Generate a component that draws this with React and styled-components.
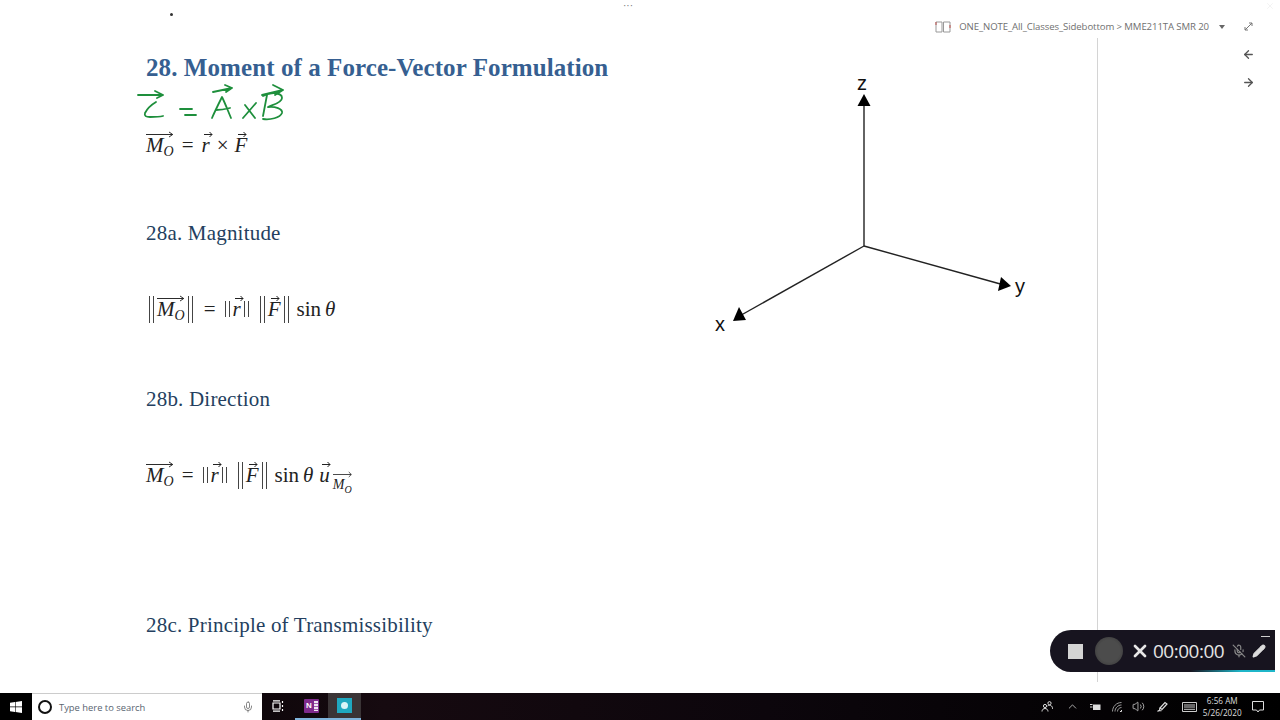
import styled, { createGlobalStyle } from 'styled-components'
import { ArrowLeft, ArrowRight, ChevronUp, Mic, MicOff, Pencil, X, Volume2 } from 'lucide-react'

const GlobalStyle = createGlobalStyle`
  html, body { margin: 0; padding: 0; background: #fff; overflow: hidden; }
  * { box-sizing: border-box; }
`

const Vec = ({ children, wide }) => <VecWrap $wide={wide}><VecArrow $wide={wide} viewBox={wide ? '0 0 30 7' : '0 0 10 7'} preserveAspectRatio="none"><path d={wide ? 'M0 3.5H29M25 1l4 2.5-4 2.5' : 'M1 3.5H9M6.5 1L9 3.5 6.5 6'} fill="none" stroke="#222" strokeWidth="1" /></VecArrow>{children}</VecWrap>

const Mo = ({ small }) => (
  <Vec wide><I>M</I><Sub $small={small}><I>O</I></Sub></Vec>
)

const Ink = () => (
  <InkSvg viewBox="0 0 150 40" width="150" height="40">
    <g fill="none" stroke="#1e8f3c" strokeWidth="1.8" strokeLinecap="round" strokeLinejoin="round">
      <path d="M1 10L26 10M18 6l8 4-6 3" />
      <path d="M19 17C14 20 10 24 8 28C7 31 9 32 13 32C17 32 22 32 26 31" />
      <path d="M43 24H55M48 30H59" />
      <path d="M75 33C78 26 82 18 85 12C88 18 91 26 94 33M79 25C84 25 89 24 93 23" />
      <path d="M76 7L95 3M88 0l7 3-6 4" />
      <path d="M106 33L119 18M108 20L118 33" />
      <path d="M130 10L126 31" />
      <path d="M126 11C133 7 145 7 145 13C145 18 135 20 131 22C138 21 146 24 145 28C143 33 133 35 126 34" />
      <path d="M125 10L146 5M136 0l10 5-8 5" />
    </g>
  </InkSvg>
)

const Axes = () => (
  <DiagramSvg viewBox="0 0 340 280" width="340" height="280">
    <g stroke="#222" strokeWidth="1.4" fill="none">
      <path d="M164 186V42" />
      <path d="M164 186L36 258" />
      <path d="M164 186L304 225" />
    </g>
    <g fill="#000">
      <path d="M164 34l6.5 12h-13z" />
      <path d="M311 226l-13 5 3-14z" />
      <path d="M33 261l6-14 7 13z" />
    </g>
    <AxisLabel x="157" y="30">z</AxisLabel>
    <AxisLabel x="315" y="233">y</AxisLabel>
    <AxisLabel x="15" y="271">x</AxisLabel>
  </DiagramSvg>
)

export default function App() {
  return (
    <Window>
      <GlobalStyle />
      <Workspace>
        <TopBar>
          <Speck />
          <Dots>···</Dots>
          <Breadcrumb>
            <svg width="16" height="12" viewBox="0 0 16 12">
              <path d="M1 1h6v10H1zM8.5 1H15v10H8.5z" fill="none" stroke="#999" strokeWidth="1" />
              <path d="M1 1v3M15 4v3" stroke="#c0504d" strokeWidth="1" />
            </svg>
            <Crumb>ONE_NOTE_All_Classes_Sidebottom &gt; MME211TA SMR 20</Crumb>
            <Caret />
          </Breadcrumb>
          <Expand>
            <svg width="9" height="9" viewBox="0 0 9 9">
              <path d="M1 8L8 1M5 1H8V4M1 5V8H4" fill="none" stroke="#777" strokeWidth="1" />
            </svg>
          </Expand>
          <CloseFaint><X size={10} strokeWidth={1} /></CloseFaint>
        </TopBar>
        <Body>
          <NotePane>
            <TextColumn>
              <Title>28. Moment of a Force-Vector Formulation</Title>
              <Ink />
              <Formula $top={6}>
                <Mo /><Op>=</Op><Vec><I>r</I></Vec><Op $tight>×</Op><Vec><I>F</I></Vec>
              </Formula>
              <Heading $top={60}>28a. Magnitude</Heading>
              <Formula $top={48}>
                <Bars $tall /><Mo /><Bars $tall /><Op>=</Op>
                <Bars /><Vec><I>r</I></Vec><Bars /><Gap $w={6} />
                <Bars $tall /><Vec><I>F</I></Vec><Bars $tall /><Gap />sin<Gap /><I>θ</I>
              </Formula>
              <Heading $top={62}>28b. Direction</Heading>
              <Formula $top={48}>
                <Mo /><Op>=</Op>
                <Bars /><Vec><I>r</I></Vec><Bars /><Gap $w={6} />
                <Bars $tall /><Vec><I>F</I></Vec><Bars $tall /><Gap />sin<Gap /><I>θ</I><Gap $w={6} />
                <Vec><I>u</I></Vec><Gap $w={2} /><Sub $drop><Mo small /></Sub>
              </Formula>
              <Heading $top={122}>28c. Principle of Transmissibility</Heading>
            </TextColumn>
            <Axes />
          </NotePane>
          <SideRail>
            <ArrowLeft size={13} strokeWidth={2.4} />
            <ArrowRight size={13} strokeWidth={2.4} />
          </SideRail>
        </Body>
        <Recorder>
          <StopSquare />
          <RecordDot />
          <X size={20} strokeWidth={3.2} color="#e6e6e6" />
          <Timer>00:00:00</Timer>
          <MicOff size={14} strokeWidth={2} color="#8a8a8a" />
          <RecorderPencil size={14} strokeWidth={2} color="#dcdcdc" fill="#dcdcdc" />
          <MinBar />
          <Progress />
        </Recorder>
      </Workspace>
      <Taskbar>
        <StartButton>
          <svg width="12" height="12" viewBox="0 0 12 12">
            <path d="M0 1.7L5 1V5.6H0zM5.6 .9L12 0V5.6H5.6zM0 6.2H5V11L0 10.3zM5.6 6.2H12V12L5.6 11.1z" fill="#fff" />
          </svg>
        </StartButton>
        <SearchBox>
          <CortanaRing />
          <SearchText>Type here to search</SearchText>
          <Mic size={12} strokeWidth={1.4} color="#555" />
        </SearchBox>
        <TaskIcon>
          <svg width="13" height="12" viewBox="0 0 13 12">
            <path d="M1 3h7v6H1zM1 .8h7M1 11.2h7M10.5 1v2M10.5 5v2M10.5 9v2" fill="none" stroke="#fff" strokeWidth="1.2" />
          </svg>
        </TaskIcon>
        <TaskIcon $running>
          <OneNoteTile>N</OneNoteTile>
        </TaskIcon>
        <TaskIcon $running $active>
          <RecorderTile><RecorderDot /></RecorderTile>
        </TaskIcon>
        <Tray>
          <TraySlot $w={27}>
            <svg width="12" height="11" viewBox="0 0 12 11" fill="none" stroke="#ddd" strokeWidth="1">
              <circle cx="4" cy="5" r="1.6" />
              <path d="M1 10.5C1 8.5 2.5 7.5 4 7.5S7 8.500 7 10.500" />
              <circle cx="8.500" cy="2.200" r="1.600" />
              <path d="M6.500 5C7.500 4 9.500 4 10.500 5S11.500 7 11.500 8" />
            </svg>
          </TraySlot>
          <TraySlot $w={24}><ChevronUp size={13} strokeWidth={1.4} /></TraySlot>
          <TraySlot $w={21.5}>
            <svg width="11" height="8" viewBox="0 0 11 8">
              <path d="M3 1.500h7.500v5.500H3z" fill="#ddd" />
              <path d="M0 1.500h2.500M0 4h2.500" stroke="#ddd" strokeWidth="1" />
            </svg>
          </TraySlot>
          <TraySlot $w={21.5}>
            <svg width="10" height="10" viewBox="0 0 10 10" fill="none" stroke="#999" strokeWidth="1">
              <path d="M.5 9.500C.5 4.500 4.500 .5 9.500 .5M3 9.500C3 6 6 3 9.500 3M5.500 9.500C5.500 7.300 7.300 5.500 9.500 5.500" />
              <path d="M8 9.500h1.500V8" stroke="#ddd" />
            </svg>
          </TraySlot>
          <TraySlot $w={22.5}><Volume2 size={13} strokeWidth={1.4} /></TraySlot>
          <TraySlot $w={24.5}>
            <svg width="11" height="11" viewBox="0 0 11 11" fill="none" stroke="#ddd" strokeWidth="1.200">
              <path d="M3 7L8 1.500L10 3L5 8.500Z" />
              <path d="M3 7L2.500 9M.5 10.500C2 8.500 3 10.500 4.500 9.500" />
            </svg>
          </TraySlot>
          <TraySlot $w={30}>
            <svg width="15" height="10" viewBox="0 0 15 10" fill="none" stroke="#ccc" strokeWidth="1">
              <path d="M.5 .5h14v9H.5zM2 3h11M2 5h11M2 7.300h11" />
            </svg>
          </TraySlot>
          <TraySlot $w={35.5}>
            <Clock><span>6:56 AM</span><span>5/26/2020</span></Clock>
          </TraySlot>
          <TraySlot $w={36}>
            <svg width="12" height="12" viewBox="0 0 12 12" fill="none" stroke="#ddd" strokeWidth="1">
              <path d="M.5 .5h11v8.500H7.500L6 11 4.500 9H.5z" />
            </svg>
          </TraySlot>
        </Tray>
      </Taskbar>
    </Window>
  )
}

const Window = styled.div`
  width: 1280px;
  height: 720px;
  display: flex;
  flex-direction: column;
  background: #fff;
  overflow: hidden;
`
const Workspace = styled.div`
  position: relative;
  flex: 1;
  display: flex;
  flex-direction: column;
  min-height: 0;
`
const TopBar = styled.div`
  position: relative;
  height: 38px;
  flex: none;
  display: flex;
  align-items: center;
  justify-content: flex-end;
  padding-right: 27px;
  padding-top: 15px;
`
const Speck = styled.div`
  position: absolute;
  left: 170px;
  top: 13px;
  width: 3px;
  height: 3px;
  border-radius: 50%;
  background: #333;
`
const Dots = styled.div`
  position: absolute;
  left: 623px;
  top: 0;
  font: 10px/12px "Liberation Sans", sans-serif;
  color: #777;
`
const Breadcrumb = styled.div`
  display: flex;
  align-items: center;
  gap: 8px;
  color: #666;
`
const Crumb = styled.span`
  font: 9.600px "Open Sans", sans-serif;
  letter-spacing: -0.1px;
  color: #707070;
`
const Caret = styled.span`
  width: 0;
  height: 0;
  margin-left: 2px;
  border-left: 3.500px solid transparent;
  border-right: 3.500px solid transparent;
  border-top: 4px solid #666;
`
const Expand = styled.div`
  display: flex;
  margin-left: 19px;
`
const CloseFaint = styled.div`
  position: absolute;
  right: 5px;
  top: 1px;
  color: #e2e2e2;
  display: flex;
`
const Body = styled.div`
  flex: 1;
  min-height: 0;
  display: flex;
  padding-bottom: 11px;
`
const NotePane = styled.div`
  width: 1098px;
  display: flex;
  border-right: 1px solid #d4d4d4;
  padding-left: 146px;
`
const TextColumn = styled.div`
  width: 554px;
  flex: none;
  display: flex;
  flex-direction: column;
  align-items: flex-start;
`
const Title = styled.h1`
  margin: 15px 0 0;
  font: bold 25px/30px "Liberation Serif", serif;
  letter-spacing: 0.08px;
  color: #365f91;
  white-space: nowrap;
`
const InkSvg = styled.svg`
  display: block;
  overflow: visible;
  margin: 2px 0 0 -9px;
`
const Formula = styled.div`
  margin-top: ${p => p.$top}px;
  display: flex;
  align-items: baseline;
  height: 28px;
  font: 21px/28px "Liberation Serif", serif;
  color: #222;
  white-space: nowrap;
`
const Heading = styled.h2`
  margin: ${p => p.$top}px 0 0;
  font: 21px/28px "Liberation Serif", serif;
  letter-spacing: 0.2px;
  color: #243f60;
  white-space: nowrap;
`
const I = styled.i`
  font-style: italic;
`
const VecWrap = styled.span`
  position: relative;
  display: inline-flex;
  align-items: baseline;
  padding-right: ${p => (p.$wide ? 0 : 1)}px;
`
const VecArrow = styled.svg`
  position: absolute;
  left: ${p => (p.$wide ? 0 : 2)}px;
  top: 0;
  width: ${p => (p.$wide ? '100%' : '10px')};
  height: 7px;
`
const Sub = styled.span`
  font-size: ${p => (p.$small ? 10 : 14)}px;
  position: relative;
  top: ${p => (p.$drop ? 7 : 4)}px;
`
const Op = styled.span`
  margin: 0 ${p => (p.$tight ? 6 : 8)}px;
`
const Gap = styled.span`
  width: ${p => p.$w || 4}px;
`
const Bars = styled.span`
  align-self: center;
  width: 5px;
  height: ${p => (p.$tall ? 27 : 16)}px;
  margin: 0 ${p => (p.$tall ? 3 : 2)}px;
  border-left: 1px solid #444;
  border-right: 1px solid #444;
`
const DiagramSvg = styled.svg`
  display: block;
  flex: none;
  margin-top: 22px;
`
const AxisLabel = styled.text`
  font: 20px "Liberation Sans", sans-serif;
  fill: #111;
`
const SideRail = styled.div`
  flex: 1;
  display: flex;
  flex-direction: column;
  align-items: flex-end;
  gap: 15px;
  padding: 10px 25px 0 0;
  color: #555;
`
const Recorder = styled.div`
  position: absolute;
  left: 1050px;
  top: 630px;
  width: 225px;
  height: 42px;
  display: flex;
  align-items: center;
  padding-left: 18px;
  border-radius: 21px 0 0 21px;
  background: #17141f;
  overflow: hidden;
`
const StopSquare = styled.div`
  width: 15px;
  height: 15px;
  background: #d4d4d4;
`
const RecordDot = styled.div`
  width: 28px;
  height: 28px;
  margin: 0 7px 0 12px;
  border-radius: 50%;
  background: radial-gradient(circle, #4c4c4c 55%, #333 100%);
`
const Timer = styled.span`
  margin: 0 8px 0 3px;
  font: 19px "Open Sans", sans-serif;
  letter-spacing: -0.5px;
  color: #e4e4e4;
`
const RecorderPencil = styled(Pencil)`
  margin-left: 6px;
`
const MinBar = styled.div`
  position: absolute;
  right: 5px;
  top: 6px;
  width: 9px;
  height: 1px;
  background: #cfcfcf;
`
const Progress = styled.div`
  position: absolute;
  right: 0;
  bottom: 0;
  width: 85px;
  height: 2px;
  background: linear-gradient(90deg, #17141f, #1fb6c9 60%);
`
const Taskbar = styled.div`
  flex: none;
  height: 27px;
  display: flex;
  align-items: stretch;
  background: linear-gradient(90deg, #000 0%, #160a10 30%, #0c060c 60%, #000 100%);
  color: #e6e6e6;
`
const StartButton = styled.div`
  width: 32px;
  display: flex;
  align-items: center;
  justify-content: center;
  background: #000;
`
const SearchBox = styled.div`
  width: 230px;
  display: flex;
  align-items: center;
  padding: 0 8px 0 6px;
  background: #fff;
  border-top: 1px solid #ccc;
`
const CortanaRing = styled.div`
  width: 14px;
  height: 14px;
  border: 2px solid #111;
  border-radius: 50%;
`
const SearchText = styled.span`
  flex: 1;
  margin-left: 7px;
  font: 9.400px "Open Sans", sans-serif;
  color: #5a6470;
`
const TaskIcon = styled.div`
  width: 33px;
  display: flex;
  align-items: center;
  justify-content: center;
  background: ${p => (p.$active ? '#3a3436' : 'transparent')};
  border-bottom: 2px solid ${p => (p.$running ? '#7fb4dc' : 'transparent')};
`
const OneNoteTile = styled.div`
  position: relative;
  width: 15px;
  height: 14px;
  padding-right: 5px;
  display: flex;
  align-items: center;
  justify-content: center;
  background: #7f2a8c;
  border-radius: 1px;
  font: bold 8px "Liberation Sans", sans-serif;
  color: #fff;
  &::after {
    content: '';
    position: absolute;
    right: 1px;
    top: 2px;
    width: 4px;
    height: 10px;
    background: repeating-linear-gradient(180deg, #f0e6f2 0 2px, #a25cad 2px 3px);
  }
`
const RecorderTile = styled.div`
  width: 15px;
  height: 15px;
  display: flex;
  align-items: center;
  justify-content: center;
  background: #1fa8c0;
`
const RecorderDot = styled.div`
  width: 7px;
  height: 7px;
  border-radius: 50%;
  background: #d8f4f8;
`
const Tray = styled.div`
  margin-left: auto;
  display: flex;
  align-items: center;
  padding-right: 4px;
  color: #ddd;
`
const TraySlot = styled.div`
  width: ${p => p.$w}px;
  display: flex;
  align-items: center;
  justify-content: center;
`
const Clock = styled.div`
  display: flex;
  flex-direction: column;
  align-items: center;
  font: 8.200px/12px "Open Sans", sans-serif;
  color: #ddd;
  white-space: nowrap;
`
